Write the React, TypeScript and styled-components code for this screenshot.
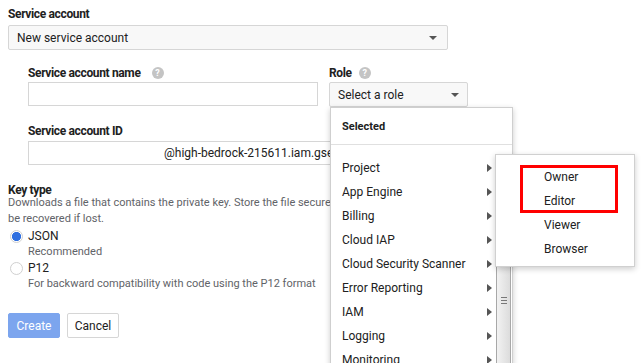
import styled, { createGlobalStyle } from "styled-components";

const GlobalStyle = createGlobalStyle`
  html, body {
    margin: 0;
    padding: 0;
    background: #fff;
    overflow: hidden;
  }
  body {
    font-family: Roboto, "Liberation Sans", Arial, sans-serif;
    font-size: 12px;
    color: #212121;
  }
`;

const Page = styled.div`
  padding: 6px 8px 0 8px;
  width: 627px;
  height: 357px;
  position: relative;
`;

const Label = styled.div<{ $gap?: number }>`
  display: flex;
  align-items: center;
  font-weight: 700;
  font-size: 12px;
  letter-spacing: -0.35px;
  line-height: 16px;
  color: #212121;
  margin-bottom: ${(p) => p.$gap ?? 3}px;
`;

const Help = styled.span<{ $gap?: number }>`
  display: inline-flex;
  align-items: center;
  justify-content: center;
  width: 12px;
  height: 12px;
  margin-left: ${(p) => p.$gap ?? 10}px;
  border-radius: 50%;
  background: #c4c4c4;
  color: #fff;
  font-size: 9px;
  font-weight: 700;
  letter-spacing: 0;
  line-height: 12px;
`;

const SelectBox = styled.div<{ $width: number }>`
  box-sizing: border-box;
  display: flex;
  align-items: center;
  justify-content: space-between;
  width: ${(p) => p.$width}px;
  height: 25px;
  padding: 0 8px 0 8px;
  background: #f8f8f8;
  border: 1px solid #d6d6d6;
  border-radius: 2px;
  font-size: 12px;
  color: #212121;
`;

const Caret = styled.span<{ $right?: number }>`
  width: 0;
  height: 0;
  border-left: 4px solid transparent;
  border-right: 4px solid transparent;
  border-top: 4px solid #555;
  margin-right: ${(p) => p.$right ?? 0}px;
`;

const Indented = styled.div`
  padding-left: 20px;
  margin-top: 15px;
`;

const FieldRow = styled.div`
  display: flex;
  gap: 11px;
`;

const Field = styled.div`
  display: flex;
  flex-direction: column;
`;

const RoleField = styled(Field)`
  position: relative;
`;

const Input = styled.div<{ $width: number; $pad?: number }>`
  box-sizing: border-box;
  width: ${(p) => p.$width}px;
  height: 24px;
  border: 1px solid #d6d6d6;
  background: #fff;
  display: flex;
  align-items: center;
  padding-left: ${(p) => p.$pad ?? 8}px;
  font-size: 12px;
  color: #212121;
  white-space: nowrap;
  overflow: hidden;
`;

const IdField = styled(Field)`
  margin-top: 16px;
`;

const KeySection = styled.div`
  margin-top: 18px;
`;

const KeyLabel = styled.div`
  font-weight: 700;
  font-size: 12px;
  letter-spacing: -0.35px;
  line-height: 14px;
  margin-bottom: -2px;
`;

const Desc = styled.div`
  font-size: 11px;
  line-height: 16px;
  color: #5f6368;
  width: 520px;
`;

const Radios = styled.div`
  margin-top: 1px;
  display: flex;
  flex-direction: column;
`;

const RadioRow = styled.div`
  display: flex;
  align-items: center;
  height: 16px;
  font-size: 12px;
  color: #212121;
`;

const RadioDot = styled.span<{ $on?: boolean }>`
  box-sizing: border-box;
  width: 13px;
  height: 13px;
  margin: 0 5px 0 2px;
  border-radius: 50%;
  border: 1px solid #d0d0d0;
  background: ${(p) => (p.$on ? "radial-gradient(circle, #2f6fe0 0 4.3px, #fff 4.8px)" : "#fff")};
`;

const Hint = styled.div`
  padding-left: 20px;
  font-size: 11px;
  line-height: 16px;
  color: #5f6368;
`;

const Buttons = styled.div`
  display: flex;
  gap: 7px;
  margin-top: 21px;
`;

const Button = styled.button<{ $primary?: boolean }>`
  box-sizing: border-box;
  height: 25px;
  width: 52px;
  padding: 0;
  border-radius: 2px;
  font-family: Roboto, "Liberation Sans", Arial, sans-serif;
  font-size: 12px;
  border: 1px solid ${(p) => (p.$primary ? "#7ca5ee" : "#d6d6d6")};
  background: ${(p) => (p.$primary ? "#7ca5ee" : "#fff")};
  color: ${(p) => (p.$primary ? "#fff" : "#212121")};
`;

const Menu = styled.div`
  position: absolute;
  top: 100%;
  left: 1px;
  width: 183px;
  height: 280px;
  box-sizing: border-box;
  background: #fff;
  border: 1px solid #cfcfcf;
  box-shadow: 0 2px 6px rgba(0, 0, 0, 0.2);
  z-index: 10;
`;

const MenuHeader = styled.div`
  height: 36px;
  padding-left: 11px;
  display: flex;
  align-items: center;
  font-weight: 700;
  font-size: 11px;
  border-bottom: 1px solid #e0e0e0;
`;

const MenuList = styled.div`
  padding-top: 11px;
  position: relative;
`;

const MenuItem = styled.div`
  height: 24px;
  display: flex;
  align-items: center;
  justify-content: space-between;
  padding: 0 20px 0 11px;
  font-size: 12px;
  color: #212121;
`;

const Arrow = styled.span`
  width: 0;
  height: 0;
  border-top: 4.5px solid transparent;
  border-bottom: 4.5px solid transparent;
  border-left: 5px solid #555;
`;

const ScrollThumb = styled.div`
  position: absolute;
  right: 1px;
  top: 15px;
  width: 15px;
  height: 280px;
  box-sizing: border-box;
  border: 1px solid #a8a8a8;
  background: linear-gradient(to right, #f2f2f2, #dcdcdc);
  display: flex;
  flex-direction: column;
  align-items: center;
  justify-content: center;
  gap: 2px;
`;

const Grip = styled.span`
  width: 6px;
  height: 1px;
  background: #777;
`;

const SubMenu = styled.div`
  position: absolute;
  left: 164px;
  top: 46px;
  width: 140px;
  box-sizing: border-box;
  padding: 10px 0 5px 0;
  background: #fff;
  border: 1px solid #d0d0d0;
  box-shadow: 0 2px 6px rgba(0, 0, 0, 0.2);
  z-index: 11;
`;

const SubItem = styled.div`
  height: 24px;
  display: flex;
  align-items: center;
  padding-left: 48px;
  font-size: 12px;
  color: #212121;
`;

const Highlight = styled.div`
  position: absolute;
  left: 24px;
  top: 10px;
  width: 98px;
  height: 48px;
  box-sizing: border-box;
  border: 3px solid #ff0000;
`;

const groups = [
  "Project",
  "App Engine",
  "Billing",
  "Cloud IAP",
  "Cloud Security Scanner",
  "Error Reporting",
  "IAM",
  "Logging",
  "Monitoring",
];

const roles = ["Owner", "Editor", "Viewer", "Browser"];

export default function App() {
  return (
    <>
      <GlobalStyle />
      <Page>
        <Label>Service account</Label>
        <SelectBox $width={440}>
          <span>New service account</span>
          <Caret $right={2} />
        </SelectBox>

        <Indented>
          <FieldRow>
            <Field>
              <Label $gap={1}>
                Service account name <Help $gap={11}>?</Help>
              </Label>
              <Input $width={290} />
            </Field>
            <RoleField>
              <Label $gap={1}>
                Role <Help $gap={7}>?</Help>
              </Label>
              <SelectBox $width={139}>
                <span>Select a role</span>
                <Caret />
              </SelectBox>
              <Menu>
                <MenuHeader>Selected</MenuHeader>
                <MenuList>
                  {groups.map((g) => (
                    <MenuItem key={g}>
                      <span>{g}</span>
                      <Arrow />
                    </MenuItem>
                  ))}
                  <ScrollThumb>
                    <Grip />
                    <Grip />
                    <Grip />
                  </ScrollThumb>
                </MenuList>
                <SubMenu>
                  {roles.map((r) => (
                    <SubItem key={r}>{r}</SubItem>
                  ))}
                  <Highlight />
                </SubMenu>
              </Menu>
            </RoleField>
          </FieldRow>

          <IdField>
            <Label $gap={2}>Service account ID</Label>
            <Input $width={440} $pad={135}>
              @high-bedrock-215611.iam.gserviceaccount.com
            </Input>
          </IdField>
        </Indented>

        <KeySection>
          <KeyLabel>Key type</KeyLabel>
          <Desc>
            Downloads a file that contains the private key. Store the file securely because this key can't
            <br />
            be recovered if lost.
          </Desc>
          <Radios>
            <RadioRow>
              <RadioDot $on />
              JSON
            </RadioRow>
            <Hint>Recommended</Hint>
            <RadioRow>
              <RadioDot />
              P12
            </RadioRow>
            <Hint>For backward compatibility with code using the P12 format</Hint>
          </Radios>
        </KeySection>

        <Buttons>
          <Button $primary>Create</Button>
          <Button>Cancel</Button>
        </Buttons>
      </Page>
    </>
  );
}
